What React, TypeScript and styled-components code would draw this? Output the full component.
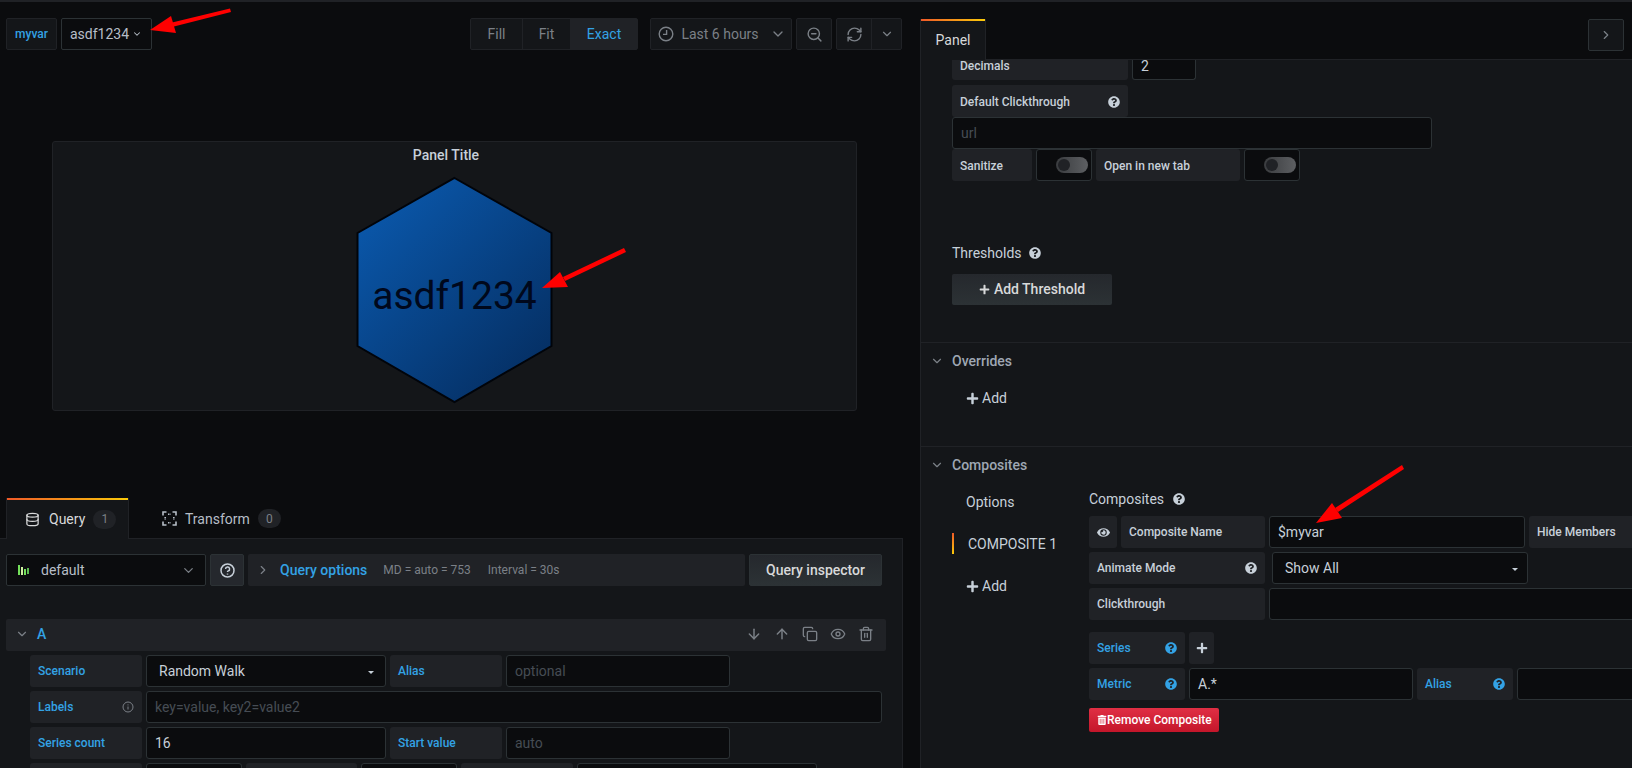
import React, { FC, ReactNode } from 'react'
import styled, { createGlobalStyle } from 'styled-components'
import {
  ArrowDown,
  ArrowUp,
  ChevronDown,
  ChevronRight,
  Copy,
  Database,
  Eye,
  RefreshCw,
  Trash2,
  ZoomOut,
} from 'lucide-react'
import { FaEye, FaPlus, FaQuestionCircle, FaTrashAlt } from 'react-icons/fa'

const GlobalStyle = createGlobalStyle`
  html, body {
    margin: 0;
    padding: 0;
    background: #0b0c0e;
  }
  * {
    box-sizing: border-box;
  }
`

const BLUE = '#33a2e5'

const Root = styled.div`
  position: relative;
  width: 1632px;
  height: 768px;
  overflow: hidden;
  display: flex;
  background: #0b0c0e;
  border-top: 2px solid #202226;
  font-family: Roboto, 'Liberation Sans', sans-serif;
  font-size: 14px;
  color: #c7d0d9;
`

const LeftColumn = styled.div`
  width: 920px;
  flex: none;
  display: flex;
  flex-direction: column;
`

const Toolbar = styled.div`
  display: flex;
  flex: none;
  align-items: center;
  height: 32px;
  margin-top: 16px;
  padding: 0 18px 0 6px;
`

const VarLabel = styled.div`
  width: 51px;
  height: 32px;
  display: flex;
  align-items: center;
  justify-content: center;
  background: #141619;
  border: 1px solid #202226;
  border-radius: 2px;
  color: ${BLUE};
  font-size: 12px;
  font-weight: 500;
`

const VarValue = styled.div`
  width: 91px;
  height: 32px;
  margin-left: 4px;
  display: flex;
  align-items: center;
  gap: 3px;
  padding-left: 8px;
  border: 1px solid #2c3235;
  border-radius: 2px;
  color: #b7bec7;
`

const Group = styled.div<{ $left: number }>`
  display: flex;
  height: 32px;
  margin-left: ${(p) => p.$left}px;
  background: #141619;
  border: 1px solid #202226;
  border-radius: 2px;
  color: #7b8087;
`

const GroupItem = styled.div<{ $width: number; $active?: boolean }>`
  width: ${(p) => p.$width}px;
  display: flex;
  align-items: center;
  justify-content: center;
  gap: 7px;
  border-left: 1px solid #202226;
  background: ${(p) => (p.$active ? '#202226' : 'transparent')};
  color: ${(p) => (p.$active ? BLUE : 'inherit')};
  &:first-child {
    border-left: 0;
  }
`

const TimeItem = styled(GroupItem)`
  padding-left: 2px;
  svg:last-child {
    margin-left: 4px;
  }
`

const Spacer = styled.div`
  flex: 1;
`

const PanelBox = styled.div`
  width: 805px;
  height: 270px;
  flex: none;
  margin: 91px 0 0 52px;
  display: flex;
  flex-direction: column;
  align-items: center;
  background: #141619;
  border: 1px solid #202226;
  border-radius: 3px;
`

const PanelTitle = styled.div`
  height: 24px;
  margin: 1px 17px 0 0;
  line-height: 24px;
  font-weight: 500;
  color: #c7d0d9;
`

const Hexagon = styled.svg`
  display: block;
  margin-top: 9px;
  flex: none;
`

const TabRow = styled.div`
  display: flex;
  flex: none;
  align-items: flex-end;
  height: 40px;
  margin-top: 87px;
  padding-left: 6px;
`

const TabActive = styled.div<{ $width: number }>`
  position: relative;
  width: ${(p) => p.$width}px;
  height: 41px;
  margin-bottom: -1px;
  padding-top: 1px;
  display: flex;
  align-items: center;
  background: #141619;
  border: 1px solid #202226;
  border-bottom: 0;
  border-top: 0;
  color: #d8d9da;
  z-index: 1;
  &::before {
    content: '';
    position: absolute;
    top: 0;
    left: 0;
    right: 0;
    height: 2px;
    background: linear-gradient(90deg, #f05a28, #fbca0a);
  }
`

const TabIdle = styled.div`
  display: flex;
  align-items: center;
  height: 40px;
  padding-top: 1px;
  margin-left: 33px;
  color: #b7bec7;
`

const TabBadge = styled.span`
  width: 23px;
  height: 19px;
  margin-left: 8px;
  display: flex;
  align-items: center;
  justify-content: center;
  border-radius: 10px;
  background: #202226;
  font-size: 12px;
  color: #7b8087;
`

const TabIcon = styled.span`
  display: flex;
  margin: 0 9px 0 18px;
`

const TabName = styled.span`
  margin-left: 8px;
`

const QueryEditor = styled.div`
  width: 903px;
  flex: 1;
  min-height: 0;
  padding: 15px 16px 0 6px;
  background: #141619;
  border-top: 1px solid #202226;
  border-right: 1px solid #202226;
`

const QueryBar = styled.div`
  display: flex;
  height: 32px;
  gap: 4px;
  margin-right: 4px;
`

const DataSource = styled.div`
  width: 200px;
  display: flex;
  align-items: center;
  padding: 0 9px 0 11px;
  background: #0b0c0e;
  border: 1px solid #2c3235;
  border-radius: 2px;
  color: #b7bec7;
  svg:last-child {
    margin-left: auto;
    color: #7b8087;
  }
`

const DataSourceName = styled.span`
  margin-left: 12px;
`

const HelpButton = styled.div`
  width: 34px;
  display: flex;
  align-items: center;
  justify-content: center;
  background: #25282d;
  border: 1px solid #2c3235;
  border-radius: 2px;
  color: #c7d0d9;
`

const QueryOptions = styled.div`
  flex: 1;
  display: flex;
  align-items: center;
  padding-left: 8px;
  background: #202226;
  border-radius: 2px;
  font-size: 12px;
  color: #7b8087;
`

const QueryOptionsTitle = styled.span`
  margin: 0 16px 0 10px;
  font-size: 14px;
  font-weight: 500;
  color: ${BLUE};
`

const IntervalText = styled.span`
  margin-left: 17px;
`

const InspectorButton = styled.div`
  width: 133px;
  display: flex;
  align-items: center;
  justify-content: center;
  background: linear-gradient(180deg, #25282d, #2c3235);
  border: 1px solid #2c3235;
  border-radius: 2px;
  font-weight: 500;
  color: #d8d9da;
`

const QueryHeader = styled.div`
  height: 32px;
  margin-top: 33px;
  display: flex;
  align-items: center;
  padding: 0 12px 2px 9px;
  background: #202226;
  border-radius: 2px;
  color: #7b8087;
`

const QueryLetter = styled.span`
  margin-left: 8px;
  font-weight: 500;
  color: ${BLUE};
  flex: 1;
`

const QueryActions = styled.div`
  display: flex;
  gap: 12px;
`

const QueryRows = styled.div`
  display: flex;
  flex-direction: column;
  gap: 4px;
  margin: 4px 0 0 24px;
`

const FormRow = styled.div`
  display: flex;
  gap: 4px;
  height: 32px;
  flex: none;
`

const FieldLabel = styled.div<{ $width: number; $blue?: boolean }>`
  width: ${(p) => p.$width}px;
  flex: none;
  display: flex;
  align-items: center;
  justify-content: space-between;
  padding: 0 8px;
  background: #202226;
  border-radius: 3px;
  font-size: 12px;
  font-weight: 500;
  color: ${(p) => (p.$blue ? BLUE : '#c7d0d9')};
`

const OptionLabel = styled(FieldLabel)`
  padding-top: 1px;
`

const FieldInput = styled.div<{ $width: number; $muted?: boolean }>`
  width: ${(p) => p.$width}px;
  flex: none;
  display: flex;
  align-items: center;
  justify-content: space-between;
  padding: 0 8px;
  background: #0b0c0e;
  border: 1px solid #2c3235;
  border-radius: 3px;
  white-space: nowrap;
  color: ${(p) => (p.$muted ? '#464c54' : '#c7d0d9')};
`

const SelectText = styled.span`
  margin-left: 4px;
`

const ShiftedInput = styled(FieldInput)`
  margin-left: 3px;
`

const Caret = styled.span<{ $right?: number }>`
  width: 0;
  height: 0;
  margin: 3px ${(p) => p.$right ?? 1}px 0 0;
  border-left: 3.5px solid transparent;
  border-right: 3.5px solid transparent;
  border-top: 3.5px solid #c7d0d9;
`

const RightColumn = styled.div`
  flex: 1;
  display: flex;
  flex-direction: column;
  min-width: 0;
`

const RightTabBar = styled.div`
  display: flex;
  flex: none;
  justify-content: space-between;
  height: 58px;
  padding: 17px 8px 0 0;
  border-bottom: 1px solid #202226;
`

const PanelTab = styled(TabActive)`
  justify-content: center;
  margin-bottom: 0;
  height: 41px;
`

const CollapseButton = styled.div`
  width: 36px;
  height: 32px;
  display: flex;
  align-items: center;
  justify-content: center;
  background: #141619;
  border: 1px solid #2c3235;
  border-radius: 2px;
  color: #7b8087;
`

const RightBody = styled.div`
  flex: 1;
  min-height: 0;
  background: #141619;
  border-left: 1px solid #202226;
`

const OptionsGroup = styled.div`
  margin-left: 31px;
`

// the options pane is scrolled: only the lower part of this row shows
const ScrolledRow = styled(FormRow)`
  height: 20px;
  & > * {
    line-height: 12px;
    border-top: 0;
    border-top-left-radius: 0;
    border-top-right-radius: 0;
  }
`

const ScrolledLabel = styled(FieldLabel)`
  padding-bottom: 8px;
`

const ScrolledInput = styled(FieldInput)`
  padding-bottom: 7px;
`

const GapRow = styled(FormRow)<{ $top: number }>`
  margin-top: ${(p) => p.$top}px;
`

const Thresholds = styled.div`
  margin: 62px 0 37px 31px;
`

const SubTitle = styled.div`
  display: flex;
  align-items: center;
  gap: 7px;
  height: 20px;
  color: #c7d0d9;
`

const AddThreshold = styled.div`
  width: 160px;
  height: 31px;
  margin-top: 11px;
  padding-bottom: 1px;
  display: flex;
  align-items: center;
  justify-content: center;
  gap: 4px;
  background: linear-gradient(180deg, #25282d, #2c3235);
  border-radius: 2px;
  font-weight: 500;
  color: #d8d9da;
`

const Section = styled.div<{ $bottom?: number }>`
  border-top: 1px solid #202226;
  padding-bottom: ${(p) => p.$bottom ?? 0}px;
`

const SectionHeader = styled.div`
  height: 36px;
  display: flex;
  align-items: center;
  gap: 8px;
  padding-left: 9px;
  font-weight: 500;
  color: #9fa7b3;
  svg {
    color: #7b8087;
  }
`

const AddLink = styled.div`
  height: 38px;
  margin-left: 45px;
  display: flex;
  align-items: center;
  gap: 3px;
  color: #c7d0d9;
`

const CompositesBody = styled.div`
  display: flex;
`

const CompositeNav = styled.div`
  width: 168px;
  flex: none;
  padding-left: 31px;
`

const NavItem = styled.div`
  height: 40px;
  padding-bottom: 2px;
  display: flex;
  align-items: center;
  padding-left: 14px;
  color: #c7d0d9;
`

const NavActive = styled.div`
  position: relative;
  height: 21px;
  margin: 10px 0 11px;
  display: flex;
  align-items: center;
  padding-left: 16px;
  color: #c7d0d9;
  &::before {
    content: '';
    position: absolute;
    left: 0;
    top: 0;
    bottom: 0;
    width: 2px;
    background: linear-gradient(180deg, #f05a28, #fbca0a);
  }
`

const NavAdd = styled(AddLink)`
  height: 42px;
  margin-left: 14px;
`

const CompositeForm = styled.div`
  flex: 1;
  min-width: 0;
  display: flex;
  flex-direction: column;
`

const CompositeTitle = styled(SubTitle)`
  height: 33px;
  padding-bottom: 1px;
  gap: 9px;
`

const EyeBox = styled(FieldLabel)`
  justify-content: center;
  padding: 0;
`

const PlusBox = styled(EyeBox)``

const RemoveButton = styled.div`
  width: 130px;
  height: 24px;
  margin-top: 8px;
  flex: none;
  display: flex;
  align-items: center;
  padding-left: 8px;
  background: linear-gradient(180deg, #e02f44, #c4162a);
  border-radius: 2px;
  font-size: 12px;
  font-weight: 500;
  color: #fff;
`

const SwitchBox = styled(FieldInput)`
  justify-content: flex-end;
  padding: 0 3px 0 0;
`

const SwitchTrack = styled.div`
  position: relative;
  width: 32px;
  height: 16px;
  border-radius: 8px;
  background: linear-gradient(90deg, #3a3c3f, #5d5f62);
  &::after {
    content: '';
    position: absolute;
    top: 2px;
    left: 2px;
    width: 12px;
    height: 12px;
    border-radius: 50%;
    background: #202226;
  }
`

const ArrowOverlay = styled.svg`
  position: absolute;
  inset: -2px 0 0 0;
  pointer-events: none;
`

const ClockIcon = () => (
  <svg width="16" height="16" viewBox="0 0 16 16" fill="none" stroke="currentColor" strokeWidth="1.4">
    <circle cx="8" cy="8" r="6.8" />
    <path d="M8.6 4v4.4H5" />
  </svg>
)

const TransformIcon = () => (
  <svg width="15" height="15" viewBox="0 0 15 15" fill="none" stroke="currentColor" strokeWidth="1.6">
    <path d="M1 4.5V1h3.5M10.5 1H14v3.5M14 10.5V14h-3.5M4.5 14H1v-3.5" />
    <path d="M6 3.2h3M6 11.8h3M3.2 6v3M11.8 6v3" strokeDasharray="1.5 1" />
  </svg>
)

const TestDataIcon = () => (
  <svg width="11" height="11" viewBox="0 0 11 11">
    <rect x="0" y="0" width="2" height="10" fill="#73e05a" />
    <rect x="3" y="2" width="2" height="8" fill="#cdf0a0" />
    <rect x="6" y="4" width="2" height="6" fill="#73e05a" />
    <rect x="9" y="3" width="2" height="6" fill="#5dbb50" />
  </svg>
)

const Help: FC<{ color?: string }> = ({ color }) => (
  <FaQuestionCircle size={12} color={color ?? '#c7d0d9'} />
)

const Toggle = ({ width }: { width: number }) => (
  <SwitchBox $width={width}>
    <SwitchTrack />
  </SwitchBox>
)

const Label: FC<{ width: number; blue?: boolean; children?: ReactNode }> = ({ width, blue, children }) => (
  <FieldLabel $width={width} $blue={blue}>
    {children}
  </FieldLabel>
)

const App: FC = () => (
  <Root>
    <GlobalStyle />
    <LeftColumn>
      <Toolbar>
        <VarLabel>myvar</VarLabel>
        <VarValue>
          asdf1234
          <ChevronDown size={10} strokeWidth={2.5} />
        </VarValue>
        <Spacer />
        <Group $left={0}>
          <GroupItem $width={51}>Fill</GroupItem>
          <GroupItem $width={48}>Fit</GroupItem>
          <GroupItem $width={67} $active>
            Exact
          </GroupItem>
        </Group>
        <Group $left={12}>
          <TimeItem $width={140}>
            <ClockIcon />
            Last 6 hours
            <ChevronDown size={16} />
          </TimeItem>
        </Group>
        <Group $left={4}>
          <GroupItem $width={34}>
            <ZoomOut size={17} />
          </GroupItem>
        </Group>
        <Group $left={4}>
          <GroupItem $width={34}>
            <RefreshCw size={17} />
          </GroupItem>
          <GroupItem $width={30}>
            <ChevronDown size={14} />
          </GroupItem>
        </Group>
      </Toolbar>

      <PanelBox>
        <PanelTitle>Panel Title</PanelTitle>
        <Hexagon width="197" height="228" viewBox="0 0 197 228">
          <defs>
            <linearGradient id="hexFill" x1="0.15" y1="0.1" x2="0.85" y2="0.9">
              <stop offset="0" stopColor="#0a56a8" />
              <stop offset="1" stopColor="#053065" />
            </linearGradient>
          </defs>
          <polygon
            points="98.5,2 195.5,57 195.5,170 98.5,226 1.5,170 1.5,57"
            fill="url(#hexFill)"
            stroke="#01040a"
            strokeWidth="2"
          />
          <text x="98.5" y="133" textAnchor="middle" fontSize="39" fontFamily="Roboto, sans-serif" fill="#00081c">
            asdf1234
          </text>
        </Hexagon>
      </PanelBox>

      <TabRow>
        <TabActive $width={123}>
          <TabIcon>
            <Database size={15} />
          </TabIcon>
          Query
          <TabBadge>1</TabBadge>
        </TabActive>
        <TabIdle>
          <TransformIcon />
          <TabName>Transform</TabName>
          <TabBadge>0</TabBadge>
        </TabIdle>
      </TabRow>

      <QueryEditor>
        <QueryBar>
          <DataSource>
            <TestDataIcon />
            <DataSourceName>default</DataSourceName>
            <ChevronDown size={15} />
          </DataSource>
          <HelpButton>
            <svg width="15" height="15" viewBox="0 0 15 15" fill="none" stroke="currentColor" strokeWidth="1.5">
              <circle cx="7.5" cy="7.5" r="6.5" />
              <path d="M5.6 6a2 2 0 1 1 2.6 1.9c-.5.2-.7.5-.7 1.1" />
              <path d="M7.5 10.6v1" />
            </svg>
          </HelpButton>
          <QueryOptions>
            <ChevronRight size={14} />
            <QueryOptionsTitle>Query options</QueryOptionsTitle>
            MD = auto = 753
            <IntervalText>Interval = 30s</IntervalText>
          </QueryOptions>
          <InspectorButton>Query inspector</InspectorButton>
        </QueryBar>

        <QueryHeader>
          <ChevronDown size={14} />
          <QueryLetter>A</QueryLetter>
          <QueryActions>
            <ArrowDown size={16} strokeWidth={2.2} />
            <ArrowUp size={16} strokeWidth={2.2} />
            <Copy size={16} />
            <Eye size={16} />
            <Trash2 size={16} />
          </QueryActions>
        </QueryHeader>

        <QueryRows>
          <FormRow>
            <Label width={112} blue>Scenario</Label>
            <FieldInput $width={240}>
              <SelectText>Random Walk</SelectText>
              <Caret $right={3} />
            </FieldInput>
            <Label width={112} blue>Alias</Label>
            <FieldInput $width={224} $muted>optional</FieldInput>
          </FormRow>
          <FormRow>
            <Label width={112} blue>
              Labels
              <svg width="12" height="12" viewBox="0 0 12 12" fill="none" stroke="#7b8087">
                <circle cx="6" cy="6" r="5" />
                <path d="M6 5.5v3M6 3.4v1" />
              </svg>
            </Label>
            <FieldInput $width={736} $muted>key=value, key2=value2</FieldInput>
          </FormRow>
          <FormRow>
            <Label width={112} blue>Series count</Label>
            <FieldInput $width={240}>16</FieldInput>
            <Label width={112} blue>Start value</Label>
            <FieldInput $width={224} $muted>auto</FieldInput>
          </FormRow>
          <FormRow>
            <Label width={112} blue />
            <FieldInput $width={96} />
            <Label width={111} blue />
            <FieldInput $width={96} />
            <Label width={112} blue />
            <FieldInput $width={240} />
          </FormRow>
        </QueryRows>
      </QueryEditor>
    </LeftColumn>

    <RightColumn>
      <RightTabBar>
        <PanelTab $width={66}>Panel</PanelTab>
        <CollapseButton>
          <ChevronRight size={14} />
        </CollapseButton>
      </RightTabBar>

      <RightBody>
        <OptionsGroup>
          <ScrolledRow>
            <ScrolledLabel $width={176}>Decimals</ScrolledLabel>
            <ScrolledInput $width={64}>2</ScrolledInput>
          </ScrolledRow>
          <GapRow $top={5}>
            <OptionLabel $width={176}>
              Default Clickthrough
              <Help />
            </OptionLabel>
          </GapRow>
          <FormRow>
            <FieldInput $width={480} $muted>url</FieldInput>
          </FormRow>
          <FormRow>
            <OptionLabel $width={80}>Sanitize</OptionLabel>
            <Toggle width={56} />
            <OptionLabel $width={144}>Open in new tab</OptionLabel>
            <Toggle width={56} />
          </FormRow>
        </OptionsGroup>

        <Thresholds>
          <SubTitle>
            Thresholds
            <Help />
          </SubTitle>
          <AddThreshold>
            <FaPlus size={11} />
            Add Threshold
          </AddThreshold>
        </Thresholds>

        <Section $bottom={29}>
          <SectionHeader>
            <ChevronDown size={14} />
            Overrides
          </SectionHeader>
          <AddLink>
            <FaPlus size={13} />
            Add
          </AddLink>
        </Section>

        <Section>
          <SectionHeader>
            <ChevronDown size={14} />
            Composites
          </SectionHeader>
          <CompositesBody>
            <CompositeNav>
              <NavItem>Options</NavItem>
              <NavActive>COMPOSITE 1</NavActive>
              <NavAdd>
                <FaPlus size={13} />
                Add
              </NavAdd>
            </CompositeNav>

            <CompositeForm>
              <CompositeTitle>
                Composites
                <Help />
              </CompositeTitle>
              <FormRow>
                <EyeBox $width={28}>
                  <FaEye size={13} />
                </EyeBox>
                <Label width={144}>Composite Name</Label>
                <FieldInput $width={256}>$myvar</FieldInput>
                <Label width={144}>Hide Members</Label>
              </FormRow>
              <GapRow $top={4}>
                <Label width={176}>
                  Animate Mode
                  <Help />
                </Label>
                <ShiftedInput $width={256}>
                  <SelectText>Show All</SelectText>
                  <Caret />
                </ShiftedInput>
              </GapRow>
              <GapRow $top={4}>
                <Label width={176}>Clickthrough</Label>
                <FieldInput $width={400} />
              </GapRow>
              <GapRow $top={12}>
                <Label width={96} blue>
                  Series
                  <Help color={BLUE} />
                </Label>
                <PlusBox $width={25}>
                  <FaPlus size={12} />
                </PlusBox>
              </GapRow>
              <GapRow $top={4}>
                <Label width={96} blue>
                  Metric
                  <Help color={BLUE} />
                </Label>
                <FieldInput $width={224}>A.*</FieldInput>
                <Label width={96} blue>
                  Alias
                  <Help color={BLUE} />
                </Label>
                <FieldInput $width={160} />
              </GapRow>
              <RemoveButton>
                <FaTrashAlt size={10} />
                Remove Composite
              </RemoveButton>
            </CompositeForm>
          </CompositesBody>
        </Section>
      </RightBody>
    </RightColumn>

    <ArrowOverlay width="1632" height="768" viewBox="0 0 1632 768">
      <g fill="#ff0000" stroke="none">
        <path d="M230 8.5 L231 12 L172 27 L170 23 Z" />
        <polygon points="150,30 171,16 176,33" />
        <path d="M624 248 L626 252 L565 281 L563 277 Z" />
        <polygon points="542,288 560,272 568,287" />
        <path d="M1402 465 L1404 469 L1338 512 L1335 508 Z" />
        <polygon points="1316,523 1332,503 1342,518" />
      </g>
    </ArrowOverlay>
  </Root>
)

export default App
